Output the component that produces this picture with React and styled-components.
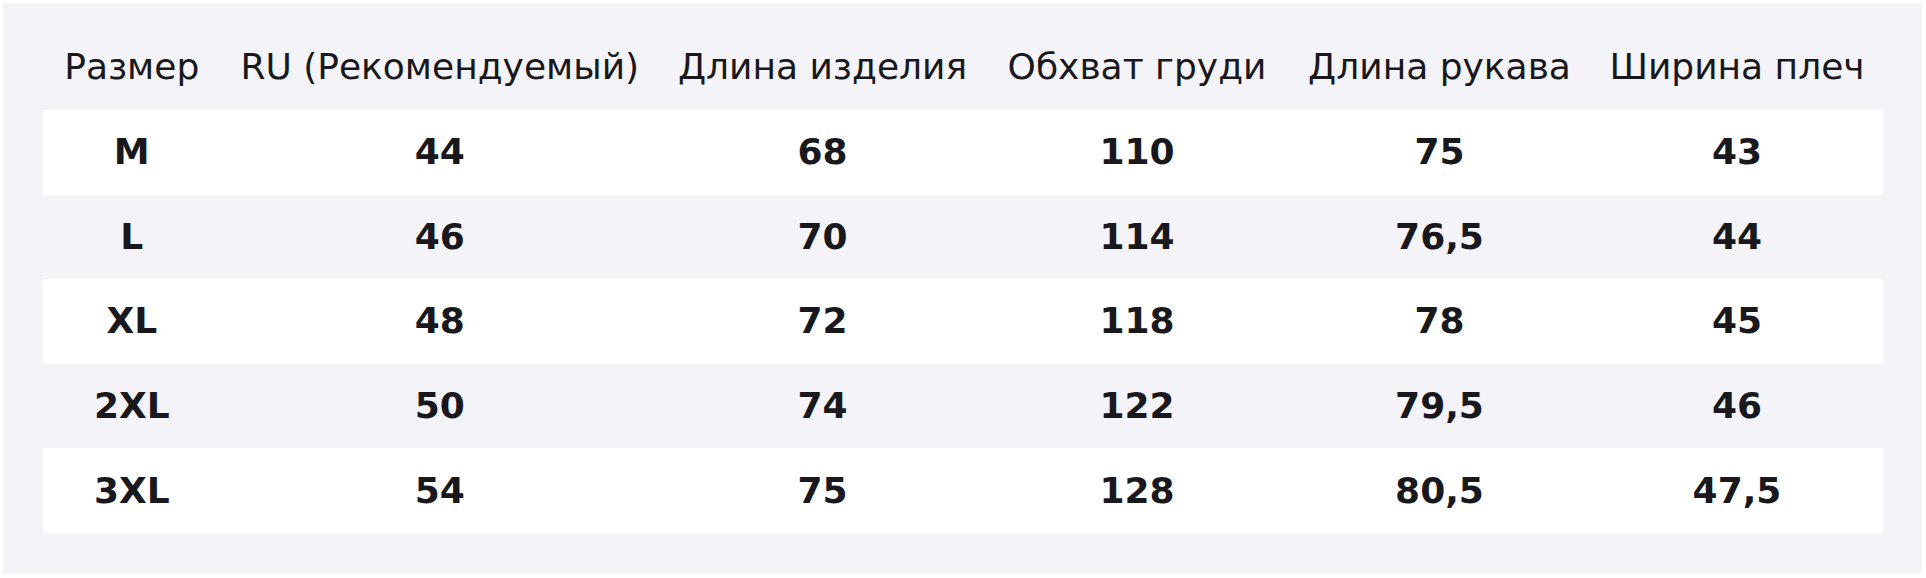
import React from "react";
import styled, { createGlobalStyle } from "styled-components";

const GlobalStyle = createGlobalStyle`
  html, body {
    margin: 0;
    padding: 0;
    background: #ffffff;
  }
  body {
    font-family: "DejaVu Sans", "Liberation Sans", sans-serif;
  }
`;

const Page = styled.div`
  padding: 3px 4px 4px 3px;
`;

const Panel = styled.section`
  background: #f4f3f8;
  padding: 40px 39px 41px 40px;
`;

const Table = styled.div`
  display: grid;
  grid-template-columns: 177.5fr 438.5fr 327fr 302fr 303fr 292fr;
`;

const Row = styled.div`
  display: contents;
`;

const HeadCell = styled.div`
  font-size: 36px;
  font-weight: 400;
  line-height: 42px;
  color: #18181d;
  text-align: center;
  white-space: nowrap;
  padding: 3px 0 22px;
`;

const Cell = styled.div`
  height: 84.6px;
  display: flex;
  align-items: center;
  justify-content: center;
  font-size: 36px;
  font-weight: 700;
  line-height: 42px;
  color: #18181d;
  white-space: nowrap;
  background: ${(p) => (p.$striped ? "#ffffff" : "transparent")};
`;

const headers = [
  "Размер",
  "RU (Рекомендуемый)",
  "Длина изделия",
  "Обхват груди",
  "Длина рукава",
  "Ширина плеч",
];

const rows = [
  ["M", "44", "68", "110", "75", "43"],
  ["L", "46", "70", "114", "76,5", "44"],
  ["XL", "48", "72", "118", "78", "45"],
  ["2XL", "50", "74", "122", "79,5", "46"],
  ["3XL", "54", "75", "128", "80,5", "47,5"],
];

export default function App() {
  return (
    <>
      <GlobalStyle />
      <Page>
        <Panel>
          <Table>
            <Row>
              {headers.map((h) => (
                <HeadCell key={h}>{h}</HeadCell>
              ))}
            </Row>
            {rows.map((r, i) => (
              <Row key={r[0]}>
                {r.map((v, j) => (
                  <Cell key={j} $striped={i % 2 === 0}>
                    {v}
                  </Cell>
                ))}
              </Row>
            ))}
          </Table>
        </Panel>
      </Page>
    </>
  );
}
